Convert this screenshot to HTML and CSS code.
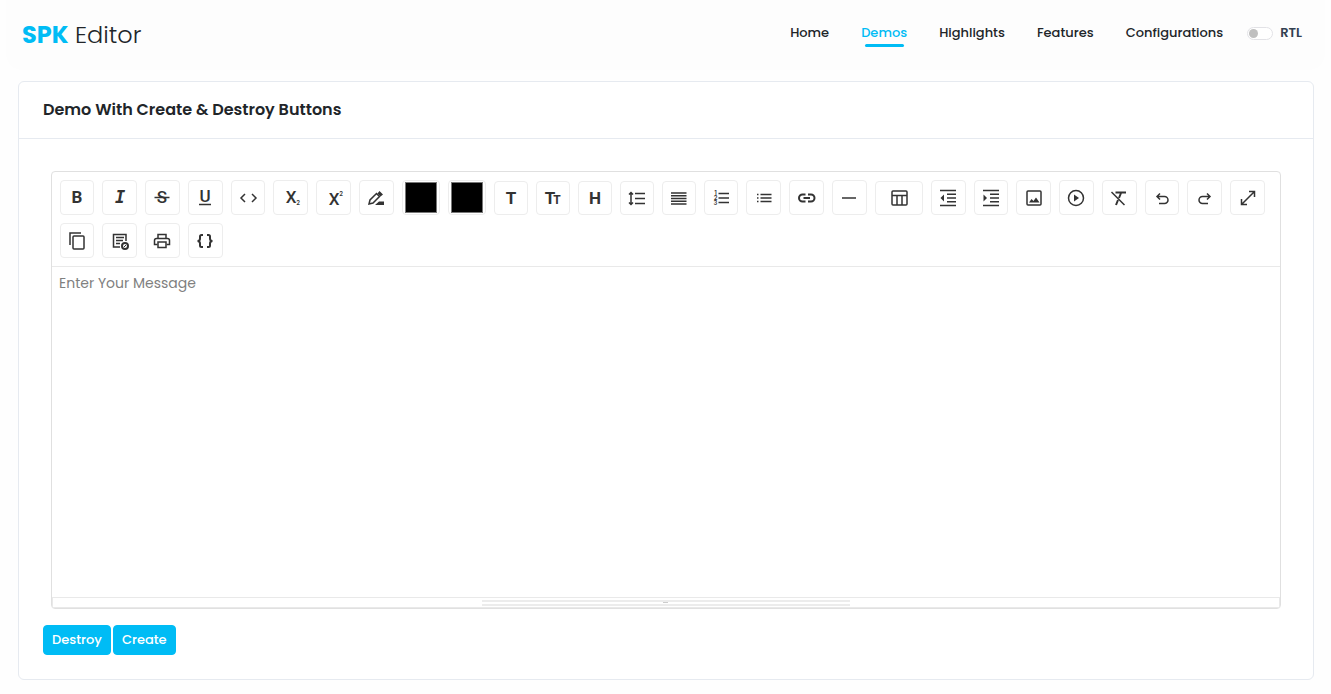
FILE: index.html
```html
<!DOCTYPE html>
<html lang="en">
<head>
  <meta charset="UTF-8" />
  <meta name="viewport" content="width=device-width, initial-scale=1.0"/>
  <title>SPK Editor</title>
  <link rel="stylesheet" href="styles.css">
</head>
<body>

<header class="header">
  <a class="logo" href="#"><b>SPK</b> Editor</a>
  <nav class="nav">
    <a href="#home">Home</a>
    <a href="#demos" class="active">Demos</a>
    <a href="#highlights">Highlights</a>
    <a href="#features">Features</a>
    <a href="#configurations">Configurations</a>
  </nav>
  <div class="rtl-switch">
    <input type="checkbox" id="rtl" class="switch">
    <label for="rtl">RTL</label>
  </div>
</header>

<main class="card">
  <h1 class="card-title">Demo With Create &amp; Destroy Buttons</h1>
  <div class="card-body">

    <div class="editor">
      <div class="toolbar">
        <button type="button" class="tool narrow" aria-label="Bold">
          <svg viewBox="0 0 25 25"><text class="letter heavy" x="12" y="18">B</text></svg>
        </button>
        <button type="button" class="tool" aria-label="Italic">
          <svg viewBox="0 0 25 25"><text class="letter slant" x="13" y="18">I</text></svg>
        </button>
        <button type="button" class="tool" aria-label="Strikethrough">
          <svg viewBox="0 0 25 25"><text class="letter" x="12" y="18">S</text><path d="M4.5 12.5h15"/></svg>
        </button>
        <button type="button" class="tool" aria-label="Underline">
          <svg viewBox="0 0 25 25"><text class="letter" x="12" y="17">U</text><path d="M6 19.5h12"/></svg>
        </button>
        <button type="button" class="tool narrow" aria-label="Code">
          <svg viewBox="0 0 25 25"><path d="M9 9l-4 4 4 4M16 9l4 4-4 4"/></svg>
        </button>
        <button type="button" class="tool" aria-label="Subscript">
          <svg viewBox="0 0 25 25"><text class="letter" x="13" y="18">X</text><text class="tiny" x="20" y="20">2</text></svg>
        </button>
        <button type="button" class="tool" aria-label="Superscript">
          <svg viewBox="0 0 25 25"><text class="letter" x="13" y="20">X</text><text class="tiny" x="20" y="11">2</text></svg>
        </button>
        <button type="button" class="tool" aria-label="Highlight">
          <svg viewBox="0 0 25 25"><path d="M5 19l1-4 6.5-6.500 3 3L9 18z"/><path class="fill" d="M13.5 8.500l2-2.500 3.500 3.500-2.500 2zM15 16.500h5V20h-9z"/></svg>
        </button>
        <input type="color" class="swatch" value="#000000" aria-label="Text color">
        <input type="color" class="swatch" value="#000000" aria-label="Background color">
        <button type="button" class="tool narrow short" aria-label="Font family">
          <svg viewBox="0 0 25 25"><text class="letter heavy" x="12" y="18">T</text></svg>
        </button>
        <button type="button" class="tool narrow short" aria-label="Font size">
          <svg viewBox="0 0 25 25"><text class="letter heavy" x="9" y="18">T</text><text class="letter small" x="16" y="18">T</text></svg>
        </button>
        <button type="button" class="tool narrow short" aria-label="Heading">
          <svg viewBox="0 0 25 25"><text class="letter heavy" x="12" y="18">H</text></svg>
        </button>
        <button type="button" class="tool narrow short" aria-label="Line height">
          <svg viewBox="0 0 25 25"><path d="M10 7.5h10M10 12.5h10M10 17.5h10M6 7v11M4 8.5l2-2 2 2M4 16.500l2 2 2-2"/></svg>
        </button>
        <button type="button" class="tool narrow short" aria-label="Align">
          <svg viewBox="0 0 25 25"><path d="M4 7h15.5M4 9.800h15.5M4 12.500h15.5M4 15.200h15.5M4 18h15.5"/></svg>
        </button>
        <button type="button" class="tool narrow" aria-label="Ordered list">
          <svg viewBox="0 0 25 25"><path d="M9.5 8.5H20M9.5 13H20M9.5 17.5H20"/><text class="tiny" x="6.5" y="10">1</text><text class="tiny" x="6.5" y="15">2</text><text class="tiny" x="6.5" y="20">3</text></svg>
        </button>
        <button type="button" class="tool" aria-label="Bullet list">
          <svg viewBox="0 0 25 25"><path d="M9.5 9.5h11M9.5 13h11M9.5 16.5h11M6 9.5h1.5M6 13h1.5M6 16.5h1.5"/></svg>
        </button>
        <button type="button" class="tool" aria-label="Link">
          <svg viewBox="0 0 25 25"><path class="bold" d="M11.5 9.5h-3a3.5 3.5 0 0 0 0 7h3M14 9.5h3a3.5 3.5 0 0 1 0 7h-3M9.500 13h6.500"/></svg>
        </button>
        <button type="button" class="tool" aria-label="Horizontal line">
          <svg viewBox="0 0 25 25"><path d="M5 13h14"/></svg>
        </button>
        <button type="button" class="tool wide short" aria-label="Table">
          <svg viewBox="0 0 25 25"><rect x="5" y="5" width="15" height="14" rx="1"/><path d="M5 9.5h15M10 9.5V19M15 9.5V19"/></svg>
        </button>
        <button type="button" class="tool" aria-label="Outdent">
          <svg viewBox="0 0 25 25"><path d="M4 5.5h16M11 9.2h9M11 13h9M11 16.800h9M4 20.5h16"/><path class="fill" d="M8 9.500v7L4.5 13z"/></svg>
        </button>
        <button type="button" class="tool narrow" aria-label="Indent">
          <svg viewBox="0 0 25 25"><path d="M4 5.5h16M11 9.2h9M11 13h9M11 16.800h9M4 20.5h16"/><path class="fill" d="M4.500 9.500v7L8 13z"/></svg>
        </button>
        <button type="button" class="tool" aria-label="Image">
          <svg viewBox="0 0 25 25"><rect x="6" y="6" width="14" height="14" rx="1"/><path class="fill" d="M8 17.5l2.500-3.500 2 2 2.500-3.500 3.500 5z"/></svg>
        </button>
        <button type="button" class="tool" aria-label="Video">
          <svg viewBox="0 0 25 25"><circle cx="12" cy="13" r="7.5"/><path class="fill" d="M10 9.500v7l5-3.500z"/></svg>
        </button>
        <button type="button" class="tool" aria-label="Clear formatting">
          <svg viewBox="0 0 25 25"><path class="bold" d="M8.500 7.500h10.500M14 8l-2 5M11 15l-2 5"/><path d="M4.5 7l13 13"/></svg>
        </button>
        <button type="button" class="tool narrow" aria-label="Undo">
          <svg viewBox="0 0 25 25"><path d="M10 8.500l-3 3 3 3M7 11.500h7.500a3.500 3.500 0 0 1 0 7H9"/></svg>
        </button>
        <button type="button" class="tool" aria-label="Redo">
          <svg viewBox="0 0 25 25"><path d="M15 8.500l3 3-3 3M18 11.500h-7.500a3.500 3.500 0 0 0 0 7H16"/></svg>
        </button>
        <button type="button" class="tool" aria-label="Fullscreen">
          <svg viewBox="0 0 25 25"><path d="M7 19L19 7M14 6.500h5.500V12M6.500 14v5.500H12"/></svg>
        </button>
        <button type="button" class="tool narrow" aria-label="Copy">
          <svg viewBox="0 0 25 25"><path d="M5 17V5h11"/><rect x="8" y="8" width="11" height="13" rx="1"/></svg>
        </button>
        <button type="button" class="tool" aria-label="Select all">
          <svg viewBox="0 0 25 25"><path d="M13 19H6.500V6.500H19V13M9 9.500h8M9 12.500h7M9 15.500h4"/><circle class="bold" cx="18" cy="18" r="3"/><path class="thin" d="M17 19l2-2"/></svg>
        </button>
        <button type="button" class="tool" aria-label="Print">
          <svg viewBox="0 0 25 25"><path d="M8 10V6.500h8V10M7.500 16.500h-3v-4a2 2 0 0 1 2-2h11a2 2 0 0 1 2 2v4h-3"/><rect x="8" y="14" width="8" height="5.500"/></svg>
        </button>
        <button type="button" class="tool" aria-label="Source">
          <svg viewBox="0 0 25 25"><path class="brace" d="M10 7H8.500Q7 7 7 8.500v2Q7 13 4.500 13 7 13 7 15.500v2Q7 19 8.500 19H10M14 7h1.500Q17 7 17 8.500v2q0 2.500 2.500 2.500Q17 13 17 15.500v2q0 1.500-1.500 1.500H14"/></svg>
        </button>
      </div>

      <textarea class="message" placeholder="Enter Your Message" aria-label="Message"></textarea>

      <div class="resizer"><div class="grip"></div></div>
    </div>

    <div class="actions">
      <button type="button" class="btn">Destroy</button>
      <button type="button" class="btn">Create</button>
    </div>
  </div>
</main>

</body>
</html>
```

FILE: styles.css
```css
* {
  box-sizing: border-box;
}

body {
  margin: 0;
  background-color: #fefefe;
  color: #212529;
  font-family: "Poppins", "Inter", sans-serif;
  font-size: 13px;
}

.header {
  display: flex;
  align-items: center;
  height: 70px;
  margin: 0 6px 11px;
  padding: 0 23px 4px 16px;
  background-color: #fdfdfd;
  border-radius: 0 0 16px 16px;
}

.logo {
  margin-right: auto;
  padding-top: 2px;
  color: #212529;
  font-size: 24px;
  font-weight: 300;
  text-decoration: none;
}

.logo b {
  color: #00bcf5;
  font-weight: 700;
}

.nav {
  display: flex;
  gap: 32px;
}

.nav a {
  position: relative;
  color: #212529;
  font-weight: 500;
  line-height: 20px;
  text-decoration: none;
}

.nav a.active {
  color: #00bcf5;
}

/* bar under the current page */
.nav a.active::after {
  content: "";
  position: absolute;
  left: 4px;
  right: 3px;
  bottom: -4px;
  height: 3px;
  border-radius: 2px;
  background-color: #00bcf5;
}

.rtl-switch {
  display: flex;
  align-items: center;
  gap: 7px;
  margin-left: 24px;
  color: #334151;
  font-weight: 600;
  line-height: 20px;
}

.switch {
  appearance: none;
  width: 26px;
  height: 13px;
  margin: 0;
  padding: 1px;
  background-color: #fff;
  border: 1px solid #e2e2e6;
  border-radius: 7px;
}

.switch::before {
  content: "";
  display: block;
  width: 9px;
  height: 9px;
  border-radius: 50%;
  background-color: #bfbfbf;
}

.switch:checked::before {
  margin-left: auto;
  background-color: #00bcf5;
}

.card {
  margin: 0 17px 14px 18px;
  background-color: #fff;
  border: 1px solid #e6eaf0;
  border-radius: 6px;
}

.card-title {
  margin: 0;
  padding: 16px 24px;
  border-bottom: 1px solid #e6eaf0;
  font-size: 16px;
  font-weight: 600;
  line-height: 24px;
}

.card-body {
  padding: 24px;
}

.editor {
  margin: 8px 8px 16px;
  border: 1px solid #e0e0e0;
  border-radius: 4px;
}

.toolbar {
  display: flex;
  flex-wrap: wrap;
  align-items: flex-end;
  gap: 8px;
  padding: 8px;
  border-bottom: 1px solid #e9e9e9;
}

.tool {
  display: flex;
  align-items: center;
  justify-content: center;
  width: 35px;
  height: 35px;
  padding: 0;
  background-color: #fff;
  border: 1px solid #ededed;
  border-radius: 4px;
  color: #333;
  cursor: pointer;
}

.tool:hover {
  background-color: #f5f5f5;
}

.tool.narrow {
  width: 34px;
}

.tool.wide {
  width: 48px;
}

.tool.short {
  height: 34px;
}

.tool svg {
  flex: none;
  width: 25px;
  height: 25px;
  fill: none;
  stroke: currentColor;
  stroke-width: 1.5;
}

.tool text {
  fill: currentColor;
  stroke: none;
  text-anchor: middle;
}

.tool .fill {
  fill: currentColor;
  stroke: none;
}

.tool .thin {
  stroke-width: 1;
}

.tool .bold,
.tool .brace {
  stroke-width: 2;
}

.letter {
  font-family: "Roboto", sans-serif;
  font-size: 17px;
  font-weight: 500;
}

.letter.heavy {
  font-weight: 700;
}

.letter.slant {
  font-family: "DejaVu Sans Mono", monospace;
  font-size: 17px;
  font-style: italic;
  font-weight: 700;
}

.letter.small {
  font-size: 12px;
  font-weight: 700;
}

.tiny {
  font-family: "Inter", sans-serif;
  font-size: 6px;
  font-weight: 600;
}

.swatch {
  appearance: none;
  width: 38px;
  height: 35px;
  padding: 1px 2px;
  background-color: #fff;
  border: 1px solid #ededed;
  border-radius: 4px;
  cursor: pointer;
}

.swatch::-webkit-color-swatch-wrapper {
  padding: 0;
}

.swatch::-webkit-color-swatch {
  border: 1px solid #777;
  border-radius: 0;
}

.message {
  display: block;
  width: 100%;
  height: 330px;
  padding: 6px 7px;
  background-color: transparent;
  border: none;
  outline: none;
  color: #212529;
  font-family: inherit;
  font-size: 14px;
  line-height: 21px;
  resize: none;
}

.message::placeholder {
  color: #808080;
}

.resizer {
  padding: 2px 0 1px;
  border: 1px solid #e9e9e9;
  cursor: row-resize;
}

.grip {
  width: 30%;
  height: 6px;
  margin: 0 auto;
  border: solid #ececec;
  border-width: 2px 0;
}

.grip::before {
  content: "";
  display: block;
  width: 5px;
  height: 1px;
  margin: 0 auto;
  background-color: #ccc;
}

.actions {
  display: flex;
  gap: 2px;
}

.btn {
  height: 30px;
  padding: 0 8px;
  background-color: #00bcf5;
  border: 1px solid #00bcf5;
  border-radius: 4px;
  color: #fff;
  font-family: inherit;
  font-size: 13px;
  font-weight: 500;
  cursor: pointer;
}

.btn:hover {
  background-color: #00a5d8;
}

@media (max-width: 700px) {
  .header {
    flex-wrap: wrap;
    height: auto;
    gap: 12px;
  }

  .nav {
    flex-wrap: wrap;
    gap: 12px;
  }
}
```
